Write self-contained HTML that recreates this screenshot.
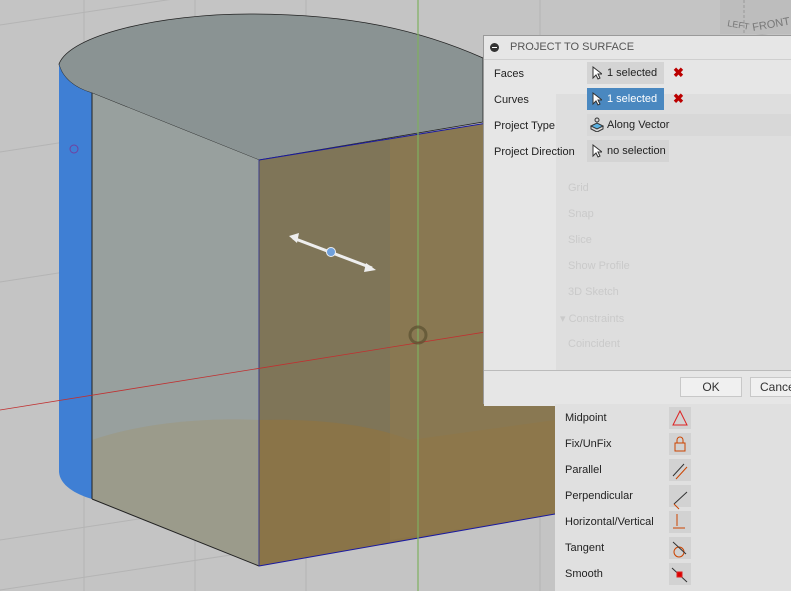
<!DOCTYPE html>
<html><head><style>
body{margin:0;width:791px;height:591px;overflow:hidden;background:#c4c4c4;font-family:"Liberation Sans",sans-serif;position:relative}
.dlg{position:absolute;left:483px;top:35px;width:308px;height:369px;background:#e6e6e6;border:1px solid #9a9a9a;border-right:none;box-sizing:border-box}
.hdr{height:23px;background:#e6e6e6;border-bottom:1px solid #cfcfcf;font-size:11px;color:#555;line-height:23px;padding-left:26px;position:relative}
.hdr:before{content:"";position:absolute;left:6px;top:7px;width:9px;height:9px;border-radius:50%;background:#333}
.hdr:after{content:"";position:absolute;left:8px;top:11px;width:5px;height:1px;background:#fff}
.row{position:absolute;left:10px;font-size:11px;color:#222}
.btn{position:absolute;left:103px;height:22px;background:#d4d4d4;font-size:11px;line-height:22px;color:#222;padding-left:20px;box-sizing:border-box}
.btn svg{position:absolute;left:5px;top:4px}
.x{position:absolute;left:189px;color:#b00;font-weight:bold;font-size:13px}
.ghost{position:absolute;font-size:11px;color:#cacaca}
.rp{position:absolute;left:555px;top:404px;width:236px;height:187px;background:#e0e0e0}
.rp div.l{position:absolute;left:10px;font-size:11px;color:#222}
.rp div.i{position:absolute;left:114px;width:22px;height:22px;background:#d2d2d2}
</style></head><body>
<svg width="791" height="591" style="position:absolute;left:0;top:0">
<g stroke="#b4b4b4" stroke-width="1" fill="none">
<line x1="0" y1="25" x2="300" y2="-20"/><line x1="0" y1="152" x2="791" y2="30"/>
<line x1="0" y1="282" x2="791" y2="160"/><line x1="0" y1="540" x2="791" y2="420"/>
<line x1="0" y1="590" x2="791" y2="470"/>
<line x1="84" y1="0" x2="84" y2="591"/><line x1="195" y1="0" x2="195" y2="591"/><line x1="306" y1="0" x2="306" y2="591"/><line x1="540" y1="0" x2="540" y2="591"/>
</g>
<path d="M59,64 C70,35 160,14 250,14 C350,14 420,30 483,58 L483,122 L259,160 L92,93 C75,88 62,78 59,64Z" fill="#8a9393" stroke="#222" stroke-width="0.8"/>
<path d="M92,93 L259,160 L259,566 L92,499Z" fill="#98a09e"/>
<path d="M92,440 C150,420 220,418 259,420 L259,566 L92,499Z" fill="#9b9a88" opacity="0.9"/>
<path d="M259,160 L555,112 L555,514 L259,566Z" fill="#7f7558"/>
<path d="M259,420 C330,418 380,428 410,440 L555,420 L555,514 L259,566Z" fill="#8a7448"/>
<path d="M390,140 L555,112 L555,514 L390,540Z" fill="#8f7a4e" opacity="0.6"/>
<path d="M59,64 C62,78 75,88 92,93 L92,499 C75,494 60,485 59,472Z" fill="#3f7fd4"/>
<line x1="92" y1="93" x2="92" y2="499" stroke="#222"/>
<line x1="92" y1="499" x2="259" y2="566" stroke="#222"/>
<line x1="259" y1="160" x2="259" y2="566" stroke="#3a3a88"/>
<line x1="259" y1="160" x2="555" y2="112" stroke="#1a1aa0"/>
<line x1="259" y1="566" x2="555" y2="514" stroke="#1a1aa0"/>
<line x1="418" y1="0" x2="418" y2="591" stroke="#7fb060" stroke-width="1.2"/>
<line x1="0" y1="410" x2="560" y2="320" stroke="#c03030" stroke-width="0.8"/>
<circle cx="418" cy="335" r="8" fill="none" stroke="#5a5030" stroke-width="3" opacity="0.7"/>
<circle cx="74" cy="149" r="4" fill="none" stroke="#7040a0"/>
<line x1="293" y1="238" x2="372" y2="268" stroke="#eee" stroke-width="3"/>
<path d="M289,236 L299,233 L297,243Z M376,270 L366,263 L364,272Z" fill="#eee"/>
<circle cx="331" cy="252" r="4.5" fill="#6fa0dc" stroke="#eee"/>
<rect x="720" y="0" width="71" height="34" fill="#bdbdbd"/>
<line x1="744" y1="0" x2="744" y2="34" stroke="#999" stroke-dasharray="3 2"/>
<text x="727" y="26" font-size="9" fill="#777" transform="rotate(10 727 26)">LEFT</text>
<text x="753" y="31" font-size="11" fill="#777" transform="rotate(-10 753 31)">FRONT</text>
</svg>
<div class="dlg">
<div class="hdr">PROJECT TO SURFACE</div>
<div style="position:absolute;left:72px;top:58px;width:236px;height:276px;background:#dedede"></div>
<div class="row" style="top:32px">Faces</div>
<div class="btn" style="top:26px;width:77px"><svg width="10" height="14"><path d="M1,1 L1,12 L4,9 L6,13 L8,12 L6,8 L10,8Z" fill="#fff" stroke="#333"/></svg>1 selected</div><div class="x" style="top:29px">✖</div>
<div class="row" style="top:58px">Curves</div>
<div class="btn" style="top:52px;width:77px;background:#4a88c0;color:#fff"><svg width="10" height="14"><path d="M1,1 L1,12 L4,9 L6,13 L8,12 L6,8 L10,8Z" fill="#fff" stroke="#333"/></svg>1 selected</div><div class="x" style="top:55px">✖</div>
<div class="btn" style="top:78px;width:205px;background:#d8d8d8"><svg width="16" height="15" style="left:2px;top:3px"><path d="M2,9 L8,6 L14,9 L8,12Z" fill="#5ab0e0" stroke="#333"/><path d="M2,9 v3 L8,15 L14,12 v-3" fill="none" stroke="#333"/><circle cx="8" cy="3" r="2" fill="none" stroke="#333"/></svg>Along Vector</div>
<div class="row" style="top:84px">Project Type</div>
<div class="row" style="top:110px">Project Direction</div>
<div class="btn" style="top:104px;width:82px"><svg width="10" height="14"><path d="M1,1 L1,12 L4,9 L6,13 L8,12 L6,8 L10,8Z" fill="#fff" stroke="#333"/></svg>no selection</div>
<div class="ghost" style="left:84px;top:146px">Grid</div><div class="ghost" style="left:84px;top:172px">Snap</div>
<div class="ghost" style="left:84px;top:198px">Slice</div><div class="ghost" style="left:84px;top:224px">Show Profile</div>
<div class="ghost" style="left:84px;top:250px">3D Sketch</div><div class="ghost" style="left:76px;top:276px">▾ Constraints</div>
<div class="ghost" style="left:84px;top:302px">Coincident</div>
<div style="position:absolute;left:0;top:334px;width:308px;height:35px;background:#e6e6e6;border-top:1px solid #bbb"></div>
<div style="position:absolute;left:196px;top:341px;width:60px;height:18px;background:#f0f0f0;border:1px solid #c8c8c8;font-size:12px;text-align:center;line-height:18px;color:#333">OK</div>
<div style="position:absolute;left:266px;top:341px;width:60px;height:18px;background:#f0f0f0;border:1px solid #c8c8c8;font-size:12px;line-height:18px;color:#333;padding-left:9px">Cancel</div>
</div>
<div class="rp">
<div class="l" style="top:8px">Midpoint</div><div class="i" style="top:3px"></div>
<div class="l" style="top:34px">Fix/UnFix</div><div class="i" style="top:29px"></div>
<div class="l" style="top:60px">Parallel</div><div class="i" style="top:55px"></div>
<div class="l" style="top:86px">Perpendicular</div><div class="i" style="top:81px"></div>
<div class="l" style="top:112px">Horizontal/Vertical</div><div class="i" style="top:107px"></div>
<div class="l" style="top:138px">Tangent</div><div class="i" style="top:133px"></div>
<div class="l" style="top:164px">Smooth</div><div class="i" style="top:159px"></div>
<svg width="236" height="187" style="position:absolute;left:0;top:0" fill="none" stroke="#d22" stroke-width="1">
<path d="M125,7 L132,21 L118,21Z"/><rect x="120" y="39" width="10" height="8" stroke="#c40"/><path d="M122,39 v-3 a3,3 0 0 1 6,0 v3" stroke="#c40"/>
<path d="M118,72 L129,60" stroke="#333"/><path d="M121,75 L132,63" stroke="#c40"/><path d="M132,88 L119,100" stroke="#333"/><path d="M119,100 L124,105" stroke="#c40"/>
<path d="M122,110 v12 M118,124 h12" stroke="#c40"/><circle cx="124" cy="148" r="5" stroke="#c40"/><path d="M118,138 L131,150" stroke="#333"/>
<path d="M117,164 L132,178" stroke="#333"/><rect x="122" y="168" width="5" height="5" fill="#d00"/>
</svg>
</div>
</body></html>
